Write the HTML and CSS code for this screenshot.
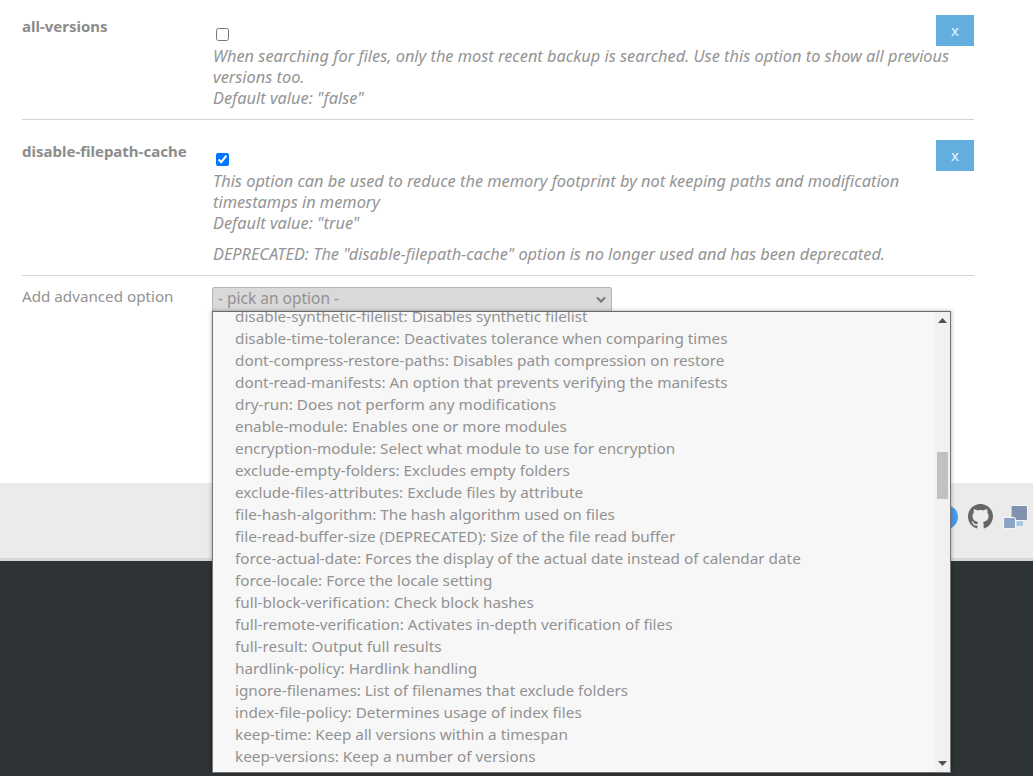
FILE: index.html
```html
<!DOCTYPE html>
<html lang="en">
<head>
<meta charset="utf-8">
<title>Advanced options</title>
<link rel="stylesheet" href="styles.css">
</head>
<body>
<main class="content">
  <section class="option first">
    <label class="name">all-versions</label>
    <div class="body">
      <input class="check" type="checkbox">
      <div class="desc">When searching for files, only the most recent backup is searched. Use this option to show all previous versions too.</div>
      <div class="desc">Default value: "false"</div>
    </div>
    <button class="remove">x</button>
  </section>
  <section class="option">
    <label class="name">disable-filepath-cache</label>
    <div class="body">
      <input class="check" type="checkbox" checked>
      <div class="desc">This option can be used to reduce the memory footprint by not keeping paths and modification timestamps in memory</div>
      <div class="desc">Default value: "true"</div>
      <div class="desc deprecated">DEPRECATED: The "disable-filepath-cache" option is no longer used and has been deprecated.</div>
    </div>
    <button class="remove">x</button>
  </section>
  <section class="add">
    <label class="add-label">Add advanced option</label>
    <div class="picker">
      <div class="select"><span class="select-text">- pick an option -</span>
        <svg class="chev" width="12" height="8" viewBox="0 0 12 8"><path d="M2 1.5 6 5.5 10 1.5" fill="none" stroke="#777" stroke-width="2"/></svg>
      </div>
      <div class="dropdown">
        <ul class="list">
          <li>disable-synthetic-filelist: Disables synthetic filelist</li>
          <li>disable-time-tolerance: Deactivates tolerance when comparing times</li>
          <li>dont-compress-restore-paths: Disables path compression on restore</li>
          <li>dont-read-manifests: An option that prevents verifying the manifests</li>
          <li>dry-run: Does not perform any modifications</li>
          <li>enable-module: Enables one or more modules</li>
          <li>encryption-module: Select what module to use for encryption</li>
          <li>exclude-empty-folders: Excludes empty folders</li>
          <li>exclude-files-attributes: Exclude files by attribute</li>
          <li>file-hash-algorithm: The hash algorithm used on files</li>
          <li>file-read-buffer-size (DEPRECATED): Size of the file read buffer</li>
          <li>force-actual-date: Forces the display of the actual date instead of calendar date</li>
          <li>force-locale: Force the locale setting</li>
          <li>full-block-verification: Check block hashes</li>
          <li>full-remote-verification: Activates in-depth verification of files</li>
          <li>full-result: Output full results</li>
          <li>hardlink-policy: Hardlink handling</li>
          <li>ignore-filenames: List of filenames that exclude folders</li>
          <li>index-file-policy: Determines usage of index files</li>
          <li>keep-time: Keep all versions within a timespan</li>
          <li>keep-versions: Keep a number of versions</li>
        </ul>
        <div class="scrollbar">
          <svg class="arrow" width="9" height="5" viewBox="0 0 9 5"><path d="M4.5 0 9 5H0Z" fill="#505050"/></svg>
          <div class="track"><div class="thumb"></div></div>
          <svg class="arrow" width="9" height="5" viewBox="0 0 9 5"><path d="M0 0H9L4.5 5Z" fill="#505050"/></svg>
        </div>
      </div>
    </div>
  </section>
</main>
<div class="bar">
  <svg class="ico-round" width="24" height="24" viewBox="0 0 24 24"><circle cx="12" cy="12" r="12" fill="#4a9be8"/></svg>
  <svg class="ico-gh" width="25" height="25" viewBox="0 0 16 16"><path fill="#666" d="M8 0C3.58 0 0 3.58 0 8c0 3.54 2.29 6.53 5.47 7.59.4.07.55-.17.55-.38 0-.19-.01-.82-.01-1.49-2.01.37-2.53-.49-2.69-.94-.09-.23-.48-.94-.82-1.13-.28-.15-.68-.52-.01-.53.63-.01 1.08.58 1.23.82.72 1.21 1.87.87 2.33.66.07-.52.28-.87.51-1.07-1.78-.2-3.64-.89-3.64-3.95 0-.87.31-1.59.82-2.15-.08-.2-.36-1.02.08-2.12 0 0 .67-.21 2.2.82.64-.18 1.32-.27 2-.27s1.36.09 2 .27c1.53-1.04 2.2-.82 2.2-.82.44 1.1.16 1.92.08 2.12.51.56.82 1.27.82 2.15 0 3.07-1.87 3.75-3.65 3.95.29.25.54.73.54 1.48 0 1.07-.01 1.93-.01 2.2 0 .21.15.46.55.38A8.01 8.01 0 0 0 16 8c0-4.42-3.58-8-8-8Z"/></svg>
  <svg class="ico-win" width="25" height="24" viewBox="0 0 25 24"><rect x="8" y="0.5" width="16.5" height="15" rx="1.5" fill="#8291ae" stroke="#f6f6f6"/><rect x="0.5" y="12.5" width="12" height="11" rx="1.5" fill="#8da3c6" stroke="#f6f6f6"/><rect x="13.5" y="16" width="6.5" height="5" fill="#a8c8e6"/></svg>
</div>
<div class="foot"></div>
</body>
</html>
```

FILE: styles.css
```css
* { box-sizing: border-box; }
html, body { margin: 0; height: 776px; overflow: hidden; }
body { background: #fff; font-family: "Noto Sans", "Open Sans", sans-serif; color: #8a8a8a; font-size: 15px; }
.content { width: 952px; height: 483px; margin-left: 22px; }
.option { display: flex; border-bottom: 1px solid #d4d4d4; padding-top: 20px; padding-bottom: 10px; }
.option.first { padding-top: 15px; }
.name { width: 191px; flex: none; font-weight: 700; font-size: 15px; line-height: 22px; color: #8c8c8c; }
.body { width: 745px; flex: none; }
.check { display: block; width: 13px; height: 13px; margin: 13px 0 5px 3px; }
.desc { font-style: italic; font-size: 16.35px; line-height: 21px; color: #949494; }
.deprecated { margin-top: 10px; }
.remove { width: 38px; height: 31px; flex: none; border: 0; background: #62afdf; color: #e8f5ff; font: 15px/31px "Noto Sans", sans-serif; padding: 0; margin-left: -22px; }
.add { display: flex; padding-top: 11px; }
.add-label { width: 190px; flex: none; line-height: 18px; font-size: 15.2px; color: #929292; }
.picker { position: relative; }
.select { width: 400px; height: 25px; background: #d9d9d9; border: 1px solid #b4b4b4; border-radius: 2px; display: flex; align-items: center; justify-content: space-between; padding: 0 4px 0 5px; font-size: 15.5px; color: #929292; }
.select-text { padding-bottom: 4px; }
.dropdown { position: absolute; left: 0; top: 24px; width: 739px; height: 462px; background: #f7f7f7; border: 1px solid #767676; border-top-color: #6a6a6a; box-shadow: 0 0 4px rgba(0,0,0,.35); display: flex; overflow: hidden; }
.list { list-style: none; margin: -7px 0 0; padding: 0 0 0 22px; flex: 1; font-size: 15.3px; color: #929292; }
.list li { height: 22px; line-height: 22px; white-space: nowrap; }
.scrollbar { width: 15px; flex: none; background: #f1f1f1; display: flex; flex-direction: column; align-items: center; padding: 6px 0; }
.track { flex: 1; width: 100%; padding-top: 129px; display: flex; justify-content: center; }
.thumb { width: 11px; height: 47px; background: #c1c1c1; }
.bar { height: 78px; background: #ebebeb; display: flex; justify-content: flex-end; align-items: center; gap: 10px; padding-right: 5px; padding-bottom: 8px; border-bottom: 3px solid #d6d6d6; }
.foot { height: 215px; background: #2e3336; }
```
